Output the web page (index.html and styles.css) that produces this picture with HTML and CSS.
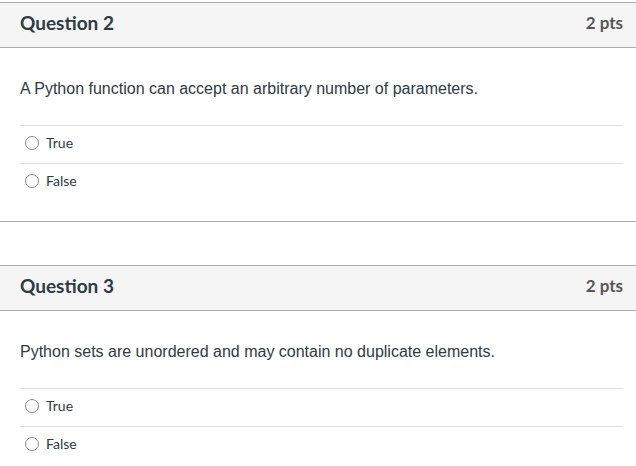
FILE: index.html
```html
<!DOCTYPE html>
<html>
<head>
<meta charset="utf-8">
<link rel="stylesheet" href="styles.css">
</head>
<body>
<div class="quiz">
  <div class="question">
    <div class="header">
      <span class="title">Question 2</span>
      <span class="pts">2 pts</span>
    </div>
    <div class="body">
      <div class="qtext">A Python function can accept an arbitrary number of parameters.</div>
      <div class="answer"><span class="radio"></span><span class="label">True</span></div>
      <div class="answer"><span class="radio"></span><span class="label">False</span></div>
    </div>
  </div>
  <div class="question">
    <div class="header">
      <span class="title">Question 3</span>
      <span class="pts">2 pts</span>
    </div>
    <div class="body">
      <div class="qtext">Python sets are unordered and may contain no duplicate elements.</div>
      <div class="answer"><span class="radio"></span><span class="label">True</span></div>
      <div class="answer"><span class="radio"></span><span class="label">False</span></div>
    </div>
  </div>
</div>
</body>
</html>
```

FILE: styles.css
```css
html, body {
  margin: 0;
  padding: 0;
  background: #ffffff;
}
.quiz {
  padding-top: 2px;
  display: flex;
  flex-direction: column;
  gap: 43px;
}
.question {
  border-top: 1px solid #acacac;
  border-bottom: 1px solid #acacac;
}
.header {
  height: 45px;
  background: #f5f5f5;
  border-bottom: 1px solid #acacac;
  display: flex;
  align-items: center;
  justify-content: space-between;
  padding: 0 13px 5px 20px;
  box-sizing: border-box;
}
.title {
  font-family: Lato, "Liberation Sans", sans-serif;
  font-weight: 700;
  font-size: 19px;
  color: #2d3b45;
}
.pts {
  font-family: Lato, "Liberation Sans", sans-serif;
  font-weight: 700;
  font-size: 17px;
  color: #555555;
}
.body {
  padding: 0 13px 20px 20px;
}
.qtext {
  font-family: "Liberation Sans", Arial, sans-serif;
  font-size: 16px;
  line-height: 20px;
  color: #2d3b45;
  padding: 31px 0 26px 0;
}
.answer {
  border-top: 1px solid #dddddd;
  height: 38px;
  display: flex;
  align-items: center;
  padding-left: 5px;
  padding-bottom: 4px;
  box-sizing: border-box;
}
.radio {
  width: 12px;
  height: 12px;
  border: 1px solid #8a8a8a;
  border-radius: 50%;
  box-sizing: content-box;
  background: #fff;
}
.label {
  margin-left: 7px;
  font-family: Lato, "Liberation Sans", sans-serif;
  font-size: 14px;
  color: #2d3b45;
}
```
